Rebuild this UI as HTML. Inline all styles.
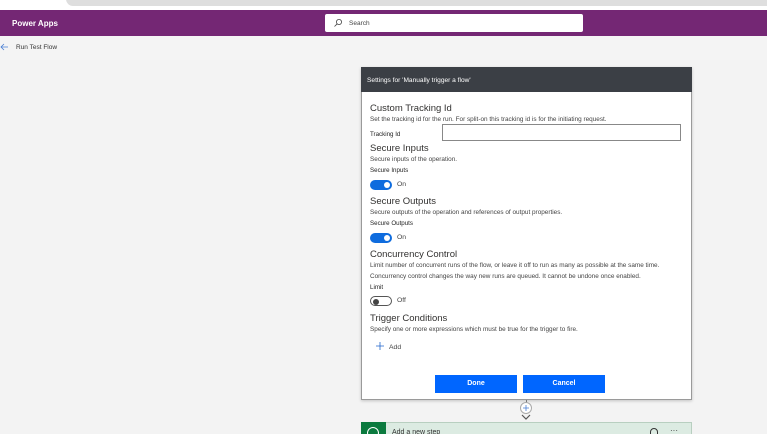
<!DOCTYPE html>
<html><head><style>
*{margin:0;padding:0;box-sizing:border-box}
html,body{width:767px;height:434px;overflow:hidden}
body{background:#f3f3f3;font-family:"Liberation Sans",sans-serif;position:relative;color:#323130}
.a{position:absolute;white-space:nowrap}
.h{font-size:9.5px;color:#323130}
.d{font-size:6.4px;color:#444}
.l{font-size:6.2px;color:#222}
.tog{position:absolute;width:22px;height:10px;border-radius:5px}
.on{background:#0f6cde}
.on:after{content:"";position:absolute;right:2px;top:2px;width:6px;height:6px;border-radius:3px;background:#fff}
.off{border:1px solid #555;background:#fff}
.off:after{content:"";position:absolute;left:2px;top:1.5px;width:6px;height:6px;border-radius:3px;background:#444}
.btn{position:absolute;top:375px;height:18px;width:82px;background:#0066ff;color:#fff;font-size:7px;font-weight:bold;text-align:center;line-height:18px}
</style></head><body>
<div class="a" style="left:0;top:0;width:767px;height:10px;background:#fff"></div>
<div class="a" style="left:66px;top:-8px;width:710px;height:14px;background:#dedede;border-radius:7px"></div>
<div class="a" style="left:0;top:10px;width:767px;height:26px;background:#742774"></div>
<div class="a" style="left:12px;top:19px;color:#fff;font-size:8px;font-weight:bold">Power Apps</div>
<div class="a" style="left:325px;top:14px;width:258px;height:18px;background:#fff;border-radius:2px"></div>
<svg class="a" style="left:333px;top:18px" width="10" height="10" viewBox="0 0 10 10"><circle cx="6" cy="4" r="2.6" fill="none" stroke="#444" stroke-width=".8"/><path d="M4.2 5.8L1.5 8.5" stroke="#444" stroke-width=".8"/></svg>
<div class="a" style="left:349px;top:20px;font-size:6.5px;color:#444">Search</div>
<div class="a" style="left:0;top:36px;width:767px;height:24px;background:#f4f4f4"></div>
<svg class="a" style="left:0;top:43px" width="9" height="8" viewBox="0 0 9 8"><path d="M8 4H1M4 1L1 4l3 3" fill="none" stroke="#4a7fd4" stroke-width=".8"/></svg>
<div class="a" style="left:16px;top:44px;font-size:6.5px;color:#333">Run Test Flow</div>

<div class="a" style="left:361px;top:67px;width:331px;height:333px;background:#fff;border:1px solid #9a9a9a;box-shadow:0 1px 3px rgba(0,0,0,.2)"></div>
<div class="a" style="left:361px;top:67px;width:331px;height:25px;background:#3b3f45"></div>
<div class="a" style="left:367px;top:77px;color:#fff;font-size:6.6px">Settings for 'Manually trigger a flow'</div>

<div class="a h" style="left:370px;top:103px">Custom Tracking Id</div>
<div class="a d" style="left:370px;top:116px">Set the tracking id for the run. For split-on this tracking id is for the initiating request.</div>
<div class="a l" style="left:370px;top:131px">Tracking Id</div>
<div class="a" style="left:442px;top:124px;width:239px;height:17px;border:1px solid #888"></div>
<div class="a h" style="left:370px;top:143px">Secure Inputs</div>
<div class="a d" style="left:370px;top:156px">Secure inputs of the operation.</div>
<div class="a l" style="left:370px;top:167px">Secure Inputs</div>
<div class="tog on" style="left:370px;top:180px"></div>
<div class="a d" style="left:397px;top:181px;font-size:6.8px">On</div>
<div class="a h" style="left:370px;top:196px">Secure Outputs</div>
<div class="a d" style="left:370px;top:209px">Secure outputs of the operation and references of output properties.</div>
<div class="a l" style="left:370px;top:220px">Secure Outputs</div>
<div class="tog on" style="left:370px;top:233px"></div>
<div class="a d" style="left:397px;top:234px;font-size:6.8px">On</div>
<div class="a h" style="left:370px;top:249px">Concurrency Control</div>
<div class="a d" style="left:370px;top:262px">Limit number of concurrent runs of the flow, or leave it off to run as many as possible at the same time.</div>
<div class="a d" style="left:370px;top:273px">Concurrency control changes the way new runs are queued. It cannot be undone once enabled.</div>
<div class="a l" style="left:370px;top:284px">Limit</div>
<div class="tog off" style="left:370px;top:296px"></div>
<div class="a d" style="left:397px;top:297px;font-size:6.8px">Off</div>
<div class="a h" style="left:370px;top:313px">Trigger Conditions</div>
<div class="a d" style="left:370px;top:326px">Specify one or more expressions which must be true for the trigger to fire.</div>
<svg class="a" style="left:375px;top:341px" width="10" height="10" viewBox="0 0 10 10"><path d="M5 1v8M1 5h8" stroke="#2266cc" stroke-width=".8"/></svg>
<div class="a d" style="left:389px;top:344px;font-size:6.8px">Add</div>
<div class="btn" style="left:435px">Done</div>
<div class="btn" style="left:523px">Cancel</div>

<div class="a" style="left:526px;top:400px;width:1px;height:14px;background:#777"></div>
<div class="a" style="left:520px;top:402px;width:12px;height:12px;border-radius:6px;border:1px solid #aaa;background:#fff"></div>
<svg class="a" style="left:521px;top:403px" width="10" height="10" viewBox="0 0 10 10"><path d="M5 2v6M2 5h6" stroke="#4a7fd4" stroke-width=".8"/></svg>
<svg class="a" style="left:521px;top:413px" width="10" height="8" viewBox="0 0 10 8"><path d="M1 2l4 4 4-4" fill="none" stroke="#555" stroke-width="1.2"/></svg>
<div class="a" style="left:361px;top:422px;width:331px;height:14px;background:#dcebe2;border:1px solid #b8cfc0"></div>
<div class="a" style="left:361px;top:422px;width:25px;height:14px;background:#0b7a3e"></div>
<div class="a" style="left:367px;top:427px;width:12px;height:12px;border-radius:6px;border:1.5px solid #fff"></div>
<div class="a" style="left:392px;top:429px;font-size:7px;color:#333">Add a new step</div>
<div class="a" style="left:650px;top:428px;width:8px;height:8px;border:1.5px solid #333;border-radius:4px 4px 0 0"></div>
<div class="a" style="left:670px;top:426px;font-size:8px;color:#333">···</div>
</body></html>
